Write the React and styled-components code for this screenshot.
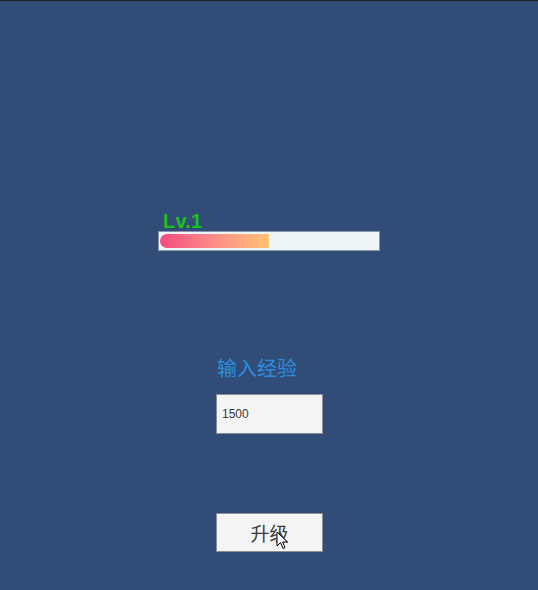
import styled, { createGlobalStyle } from "styled-components";

const GlobalStyle = createGlobalStyle`
  html, body {
    margin: 0;
    padding: 0;
  }
  body {
    background: #314d77;
    font-family: "Liberation Sans", "Noto Sans CJK SC", sans-serif;
  }
`;

const Page = styled.div`
  width: 538px;
  height: 590px;
  box-sizing: border-box;
  border-top: 1px solid #1e1e1e;
  background: #314d77;
  display: flex;
  flex-direction: column;
  overflow: hidden;
`;

const LevelBlock = styled.div`
  margin: 210px 0 0 158px;
  display: flex;
  flex-direction: column;
`;

const LevelLabel = styled.div`
  font-family: "Liberation Sans", sans-serif;
  font-weight: 700;
  font-size: 20px;
  line-height: 20px;
  letter-spacing: 0.2px;
  color: #1dc01d;
  padding-left: 5px;
`;

const Bar = styled.div`
  width: 222px;
  height: 20px;
  box-sizing: border-box;
  border: 1px solid #8796ab;
  background: #eef5f8;
  padding: 2px 1px;
  display: flex;
`;

const Fill = styled.div`
  height: 100%;
  border-radius: 7px 0 0 7px;
  background: linear-gradient(90deg, #f24c7d 0%, #fd8e8a 50%, #ffc274 100%);
`;

const Form = styled.div`
  margin: 106px 0 0 216px;
  display: flex;
  flex-direction: column;
`;

const InputLabel = styled.div`
  font-size: 20px;
  line-height: 24px;
  color: #2b8de0;
  padding-left: 1px;
`;

const Input = styled.input`
  margin-top: 13px;
  width: 107px;
  height: 40px;
  box-sizing: border-box;
  border: 1px solid #8a8f96;
  background: #f4f4f4;
  padding: 0 5px;
  font-family: "Liberation Sans", sans-serif;
  font-size: 12px;
  color: #3a3a3a;
  outline: none;
`;

const Button = styled.button`
  position: relative;
  margin-top: 79px;
  width: 107px;
  height: 39px;
  box-sizing: border-box;
  border: 1px solid #8a8f96;
  background: #f4f4f4;
  font-family: "Noto Sans CJK SC", sans-serif;
  font-size: 19px;
  color: #3a3a3a;
  padding: 0;
`;

const Cursor = styled.svg`
  position: absolute;
  left: 59px;
  top: 17px;
`;

export default function App() {
  const progress = 0.5;
  return (
    <Page>
      <GlobalStyle />
      <LevelBlock>
        <LevelLabel>Lv.1</LevelLabel>
        <Bar>
          <Fill style={{ width: `${progress * 100}%` }} />
        </Bar>
      </LevelBlock>
      <Form>
        <InputLabel>输入经验</InputLabel>
        <Input defaultValue="1500" />
        <Button>
          升级
          <Cursor width="13" height="20" viewBox="0 0 13 20">
            <path
              d="M1 1 L1 15 L4.5 11.5 L7 17.5 L9 16.6 L6.6 11 L11.5 11 Z"
              fill="#fff"
              stroke="#000"
              strokeWidth="1"
              strokeLinejoin="round"
            />
          </Cursor>
        </Button>
      </Form>
    </Page>
  );
}
